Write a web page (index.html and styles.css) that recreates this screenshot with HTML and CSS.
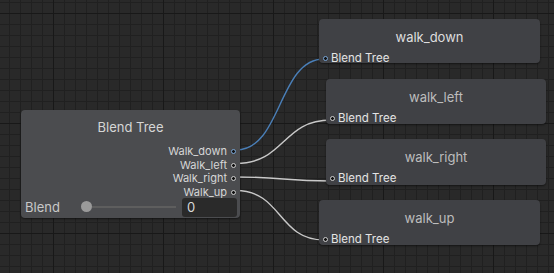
FILE: index.html
```html
<!DOCTYPE html>
<html lang="en">
<head>
    <meta charset="UTF-8">
    <title>Blend Tree</title>
    <link rel="stylesheet" href="styles.css">
</head>
<body>

<div class="graph">
    <!-- connections between the blend tree and its motions -->
    <svg class="wires" width="554" height="273" viewBox="0 0 554 273">
        <path class="wire active" d="M236 150 C282 150 278 59 324 59"/>
        <path class="wire" d="M236 163.5 C285 163.5 282 120 331 120"/>
        <path class="wire" d="M236 177 C285 177 282 181 331 181"/>
        <path class="wire" d="M236 190.5 C282 190.5 278 240 324 240"/>
    </svg>

    <div class="node blend-node">
        <div class="node-title">Blend Tree</div>
        <div class="outputs">
            <div class="out">Walk_down <span class="dot blue"></span></div>
            <div class="out">Walk_left <span class="dot"></span></div>
            <div class="out">Walk_right <span class="dot"></span></div>
            <div class="out">Walk_up <span class="dot"></span></div>
        </div>
        <div class="blend-row">
            <span class="blend-label">Blend</span>
            <div class="slider"><span class="knob"></span></div>
            <div class="num-field">0</div>
        </div>
    </div>

    <div class="node motion" id="walkDown">
        <div class="motion-title bright">walk_down</div>
        <div class="in"><span class="dot blue"></span>Blend Tree</div>
    </div>
    <div class="node motion" id="walkLeft">
        <div class="motion-title">walk_left</div>
        <div class="in"><span class="dot"></span>Blend Tree</div>
    </div>
    <div class="node motion" id="walkRight">
        <div class="motion-title">walk_right</div>
        <div class="in"><span class="dot"></span>Blend Tree</div>
    </div>
    <div class="node motion" id="walkUp">
        <div class="motion-title">walk_up</div>
        <div class="in"><span class="dot"></span>Blend Tree</div>
    </div>
</div>

</body>
</html>
```

FILE: styles.css
```css
body {
    margin: 0;
    padding: 0;
    font-family: Inter, "Noto Sans", sans-serif;
    background-color: #292929;
}
.graph {
    position: relative;
    width: 554px;
    height: 273px;
    overflow: hidden;
    background-color: #292929;
    background-image:
        linear-gradient(to right, #181818 1px, transparent 1px),
        linear-gradient(to bottom, #181818 1px, transparent 1px),
        linear-gradient(to right, #202020 1px, transparent 1px),
        linear-gradient(to bottom, #202020 1px, transparent 1px);
    background-size: 110px 110px, 110px 110px, 11px 11px, 11px 11px;
    background-position: 53px 0, 0 13px, 9px 0, 0 2px;
}
.wires {
    position: absolute;
    left: 0;
    top: 0;
}
.wire {
    fill: none;
    stroke: #c9c9c9;
    stroke-width: 1.4;
}
.wire.active {
    stroke: #4a7fb8;
}
.node {
    position: absolute;
    box-sizing: border-box;
    border-radius: 4px;
    box-shadow: 0 1px 2px rgba(0,0,0,0.5);
}
.dot {
    display: inline-block;
    width: 3px;
    height: 3px;
    border: 1px solid #cfcfcf;
    border-radius: 50%;
    background-color: #111;
}
.dot.blue {
    border-color: #7aa7d8;
}

/* blend tree node */
.blend-node {
    left: 21px;
    top: 110px;
    width: 219px;
    height: 108px;
    background-color: #4b4c4f;
    color: #d6d6d6;
}
.node-title {
    height: 35px;
    line-height: 34px;
    text-align: center;
    font-size: 13px;
}
.outputs {
    display: flex;
    flex-direction: column;
    align-items: flex-end;
    padding-right: 4px;
}
.out {
    height: 13.5px;
    line-height: 13.5px;
    font-size: 11px;
    display: flex;
    align-items: center;
    gap: 4px;
}
.blend-row {
    display: flex;
    align-items: center;
    height: 20px;
    margin-top: -2px;
    padding-left: 4px;
}
.blend-label {
    font-size: 13px;
    color: #c8c8c8;
    width: 56px;
}
.slider {
    position: relative;
    width: 90px;
    height: 2px;
    margin-left: 5px;
    background-color: #5e5e5e;
}
.knob {
    position: absolute;
    left: -5px;
    top: -5px;
    width: 11px;
    height: 11px;
    border-radius: 50%;
    background-color: #9a9a9a;
}
.num-field {
    box-sizing: border-box;
    width: 55px;
    height: 19px;
    margin-left: 6px;
    padding-left: 5px;
    line-height: 19px;
    font-size: 13px;
    color: #d8d8d8;
    background-color: #2a2a2a;
    border-radius: 3px;
}

/* motion nodes */
.motion {
    background-color: #404145;
    display: flex;
    flex-direction: column;
}
#walkDown { left: 319px; top: 19px; width: 221px; height: 44px; }
#walkLeft { left: 326px; top: 79px; width: 220px; height: 45px; }
#walkRight { left: 326px; top: 139px; width: 220px; height: 46px; }
#walkUp { left: 319px; top: 200px; width: 221px; height: 45px; }
.motion-title {
    height: 33px;
    line-height: 36px;
    text-align: center;
    font-size: 13px;
    color: #bdbdbd;
}
.motion-title.bright {
    color: #dedede;
}
.in {
    display: flex;
    align-items: center;
    gap: 3px;
    padding-left: 4px;
    font-size: 11.5px;
    color: #e4e4e4;
    line-height: 13px;
}
```
